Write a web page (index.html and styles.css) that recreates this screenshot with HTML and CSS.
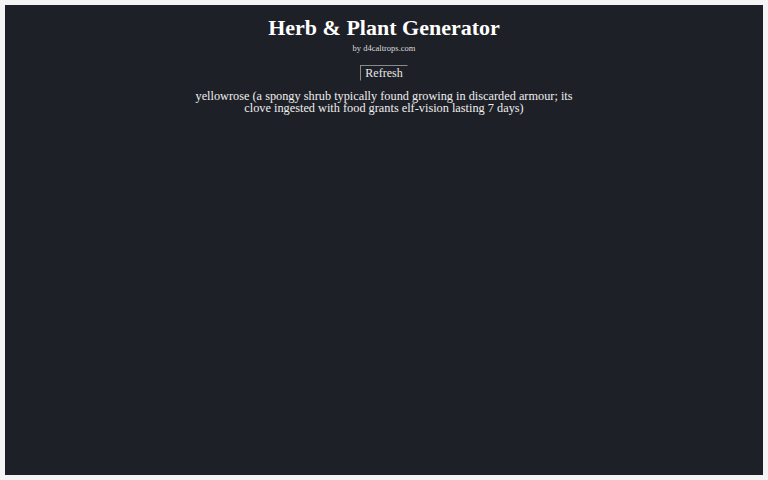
FILE: index.html
```html
<!DOCTYPE html>
<html lang="en">
<head>
    <meta charset="UTF-8">
    <meta name="viewport" content="width=device-width, initial-scale=1.0">
    <title>Herb &amp; Plant Generator</title>
    <link rel="stylesheet" href="styles.css">
</head>
<body>
    <div id="panel">
        <h1>Herb &amp; Plant Generator</h1>
        <div class="byline">by d4caltrops.com</div>
        <button id="refreshBtn">Refresh</button>
        <p id="result">yellowrose (a spongy shrub typically found growing in discarded armour; its clove ingested with food grants elf-vision lasting 7 days)</p>
    </div>
</body>
</html>
```

FILE: styles.css
```css
html, body { height: 100%; }
body { margin: 0; padding: 5px; box-sizing: border-box; background: #f4f4f4; font-family: "Liberation Serif", "DejaVu Serif", serif; }
#panel { height: 100%; background: #1e2027; color: #eeeeee; text-align: center; padding-top: 10px; box-sizing: border-box; }
h1 { margin: 0; font-size: 22px; font-weight: bold; line-height: 26px; color: #fff; }
.byline { font-size: 8.5px; margin-top: 2px; color: #ddd; }
button { margin-top: 12px; padding: 0 4px; font-family: inherit; font-size: 12px; line-height: 14px; color: #e8e8e8; background: transparent; border: 1px solid; border-color: #8a8a8a #1e2027 #1e2027 #8a8a8a; cursor: pointer; }
#result { width: 386px; margin: 9px auto 0; font-size: 12.3px; line-height: 12px; }
```
